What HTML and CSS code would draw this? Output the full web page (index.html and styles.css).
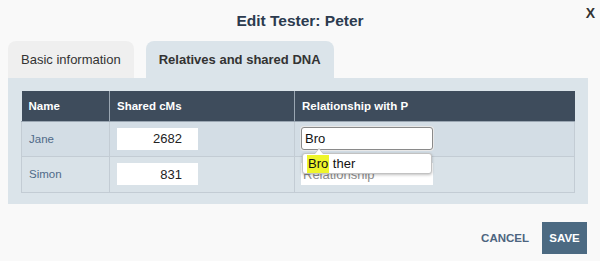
FILE: index.html
```html
<!DOCTYPE html>
<html>
<head>
<meta charset="utf-8">
<link rel="stylesheet" href="styles.css">
</head>
<body>
<div class="dialog">
  <div class="dialog-header">
    <h1 class="title">Edit Tester: Peter</h1>
    <button class="close">X</button>
  </div>
  <div class="tabs">
    <div class="tab">Basic information</div>
    <div class="tab active">Relatives and shared DNA</div>
  </div>
  <div class="panel">
    <table class="grid">
      <thead>
        <tr>
          <th class="c-name">Name</th>
          <th class="c-cms">Shared cMs</th>
          <th class="c-rel">Relationship with P</th>
        </tr>
      </thead>
      <tbody>
        <tr class="row-a">
          <td class="name">Jane</td>
          <td><input class="cms" type="text" value="2682"></td>
          <td class="rel-cell">
            <div class="combo">
              <input class="rel focused" type="text" value="Bro">
              <div class="menu">
                <div class="menu-item"><span class="hl">Bro</span> ther</div>
              </div>
            </div>
          </td>
        </tr>
        <tr class="row-b">
          <td class="name">Simon</td>
          <td><input class="cms" type="text" value="831"></td>
          <td class="rel-cell"><input class="rel plain" type="text" placeholder="Relationship"></td>
        </tr>
      </tbody>
    </table>
  </div>
  <div class="footer">
    <button class="btn-cancel">CANCEL</button>
    <button class="btn-save">SAVE</button>
  </div>
</div>
</body>
</html>
```
FILE: styles.css
```css
html, body {
  margin: 0;
  padding: 0;
  background: #f9f9f9;
  font-family: "Liberation Sans", Arial, sans-serif;
  color: #333;
}
.dialog {
  position: relative;
  width: 600px;
  height: 261px;
}
.dialog-header {
  height: 41px;
  display: flex;
  justify-content: center;
  align-items: flex-start;
}
.title {
  margin: 12px 0 0 0;
  font-size: 15.5px;
  line-height: 18px;
  font-weight: bold;
  color: #2c3b4f;
}
.close {
  position: absolute;
  top: 5px;
  right: 5px;
  border: 0;
  background: none;
  padding: 0;
  font-family: "Liberation Sans", Arial, sans-serif;
  font-weight: bold;
  font-size: 14px;
  line-height: 16px;
  color: #333;
}
.tabs {
  display: flex;
  gap: 12px;
  padding-left: 8px;
}
.tab {
  height: 37px;
  line-height: 37px;
  padding: 0 13px;
  font-size: 13px;
  background: #efefef;
  border-radius: 8px 8px 0 0;
  color: #333;
}
.tab.active {
  background: #dbe4ea;
  font-weight: bold;
  padding: 0 13px 0 13px;
}
.panel {
  margin: 0 12px 0 8px;
  padding: 13px 13px 11px 13px;
  background: #dbe4ea;
}
.grid {
  width: 554px;
  border-collapse: collapse;
  font-size: 11.5px;
}
.grid th {
  background: #3e4c5c;
  color: #fff;
  text-align: left;
  font-weight: bold;
  font-size: 11.5px;
  height: 30px;
  padding: 0 0 0 7px;
  border: 1px solid #9aa6b2;
  border-top: 0;
  box-sizing: border-box;
}
.grid th:first-child { border-left: 0; }
.grid th:last-child { border-right: 0; }
.c-name { width: 88px; }
.c-cms { width: 185px; }
.grid td {
  border: 1px solid #c3ccd4;
  padding: 0 0 0 7px;
  box-sizing: border-box;
}
.row-a td { height: 35px; background: #d3dde5; }
.row-b td { height: 36px; background: #d9e2e8; }
.name { color: #4f6a88; padding-left: 7px !important; font-size: 11.5px; }
.cms {
  width: 81px;
  height: 22px;
  box-sizing: border-box;
  border: 0;
  background: #fff;
  text-align: right;
  padding: 0 16px 0 0;
  font-family: "Liberation Sans", Arial, sans-serif;
  font-size: 13px;
  color: #222;
  display: block;
}
.rel-cell { padding-left: 6px !important; }
.combo {
  position: relative;
  width: 132px;
}
.rel {
  width: 132px;
  height: 23px;
  box-sizing: border-box;
  font-family: "Liberation Sans", Arial, sans-serif;
  font-size: 13px;
  color: #111;
  display: block;
  background: #fff;
  outline: none;
}
.rel.focused {
  border: 1px solid #8a8a8a;
  border-radius: 3px;
  box-shadow: 0 0 0 1px #e8e8e8;
  padding: 0 3px;
}
.rel.plain {
  border: 0;
  padding: 0 4px 0 2px;
  height: 22px;
}
.rel.plain::placeholder { color: #8c8c8c; }
.menu {
  position: absolute;
  left: 1px;
  top: 26px;
  width: 130px;
  height: 21px;
  box-sizing: border-box;
  background: #fff;
  border: 1px solid #c2c2c2;
  border-radius: 3px;
  box-shadow: 0 1px 3px rgba(0,0,0,0.25);
  z-index: 2;
}
.menu::before {
  content: "";
  position: absolute;
  left: 11px;
  top: -6px;
  border-left: 5px solid transparent;
  border-right: 5px solid transparent;
  border-bottom: 6px solid #c2c2c2;
}
.menu::after {
  content: "";
  position: absolute;
  left: 12px;
  top: -5px;
  border-left: 4px solid transparent;
  border-right: 4px solid transparent;
  border-bottom: 5px solid #fff;
}
.menu-item {
  padding: 0 0 0 4px;
  line-height: 19px;
  font-size: 13px;
  color: #111;
}
.hl {
  display: inline-block;
  background: #eef52b;
  padding: 0 1px;
  line-height: 18px;
}
.footer {
  display: flex;
  justify-content: flex-end;
  align-items: center;
  gap: 13px;
  margin-top: 18px;
  padding-right: 13px;
}
.btn-cancel, .btn-save {
  border: 0;
  font-family: "Liberation Sans", Arial, sans-serif;
  font-weight: bold;
  font-size: 11.5px;
  cursor: pointer;
}
.btn-cancel {
  background: none;
  color: #4d6580;
  padding: 0;
}
.btn-save {
  background: #4c6a82;
  color: #fff;
  width: 45px;
  height: 32px;
  padding: 0;
}
```
